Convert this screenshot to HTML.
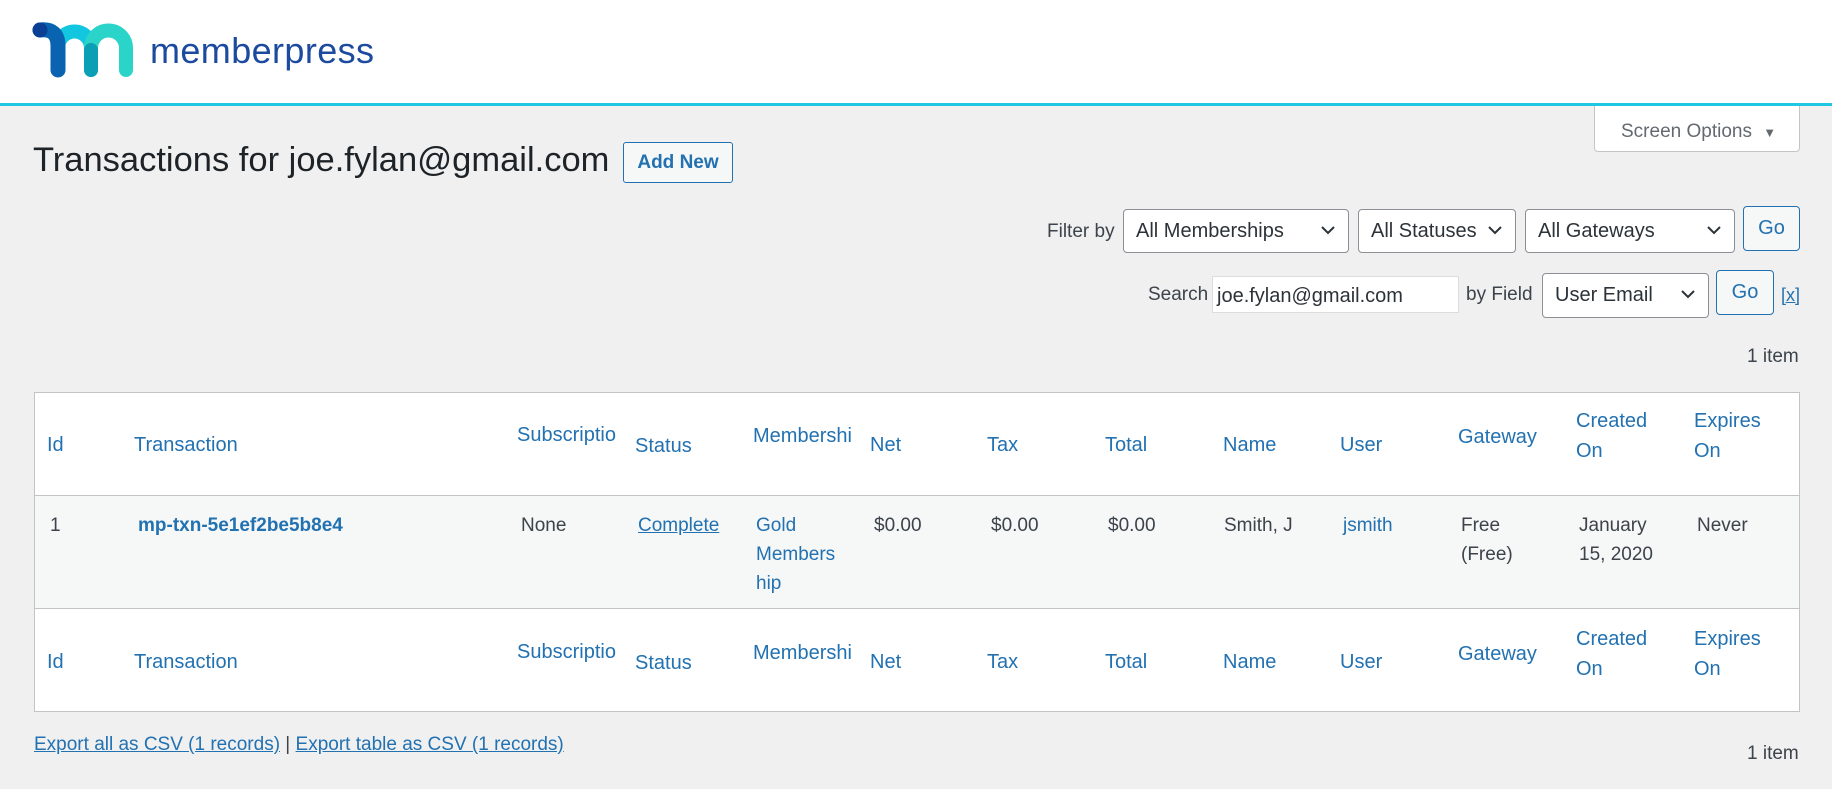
<!DOCTYPE html>
<html><head><meta charset="utf-8"><style>
*{margin:0;padding:0;box-sizing:border-box}
body{width:1832px;height:789px;background:#f0f0f1;font-family:"Liberation Sans",sans-serif;color:#3c434a;position:relative;overflow:hidden;font-size:19px}
.a{position:absolute;white-space:nowrap}
.l{color:#2271b1}
.hd{position:absolute;left:0;top:0;width:1832px;height:106px;background:#fff;border-bottom:3px solid #1fc7e4}
.sel{position:absolute;background:#fff;border:1px solid #8c8f94;border-radius:4px;height:44px;font-size:20px;color:#2c3338;padding:0 12px;line-height:42px}
.sel svg{position:absolute;right:12px;top:15px}
.go{position:absolute;border:1px solid #2271b1;border-radius:4px;background:#f6f7f7;color:#2271b1;font-size:20px;text-align:center}
.tbl{position:absolute;left:34px;top:392px;width:1766px;height:320px;border:1px solid #c3c4c7;background:#fff}
.r2{position:absolute;left:0;top:102px;width:100%;height:114px;background:#f6f7f7;border-top:1px solid #c3c4c7;border-bottom:1px solid #c3c4c7}
.th{font-size:20px;color:#2271b1;line-height:30px}
.td{font-size:19px;line-height:29px}
</style></head><body>
<div class="hd"></div>
<svg class="a" style="left:30px;top:18px" width="110" height="66" viewBox="30 18 110 66">
<path d="M58,48 A16.5,16.5 0 0 1 91,48 L91,70" fill="none" stroke="#12c6df" stroke-width="14" stroke-linecap="round"/>
<path d="M91,48 A17.5,17.5 0 0 1 126,48 L126,70" fill="none" stroke="#2ad4c9" stroke-width="14" stroke-linecap="round"/>
<path d="M91,50 L91,70" fill="none" stroke="#0b9fb5" stroke-width="14" stroke-linecap="round"/>
<path d="M40,30 Q58,28 58,46 L58,70" fill="none" stroke="#0a63b0" stroke-width="15" stroke-linecap="round"/>
<circle cx="40" cy="30" r="7.5" fill="#0a3f94"/>
</svg>
<div class="a" style="left:150px;top:30px;font-size:36px;color:#1b4a9e;letter-spacing:0.4px">memberpress</div>

<div class="a" style="left:1594px;top:106px;width:206px;height:46px;background:#fff;border:1px solid #c3c4c7;border-top:none;border-radius:0 0 4px 4px;color:#646970;font-size:19px;line-height:52px;padding-left:26px">Screen Options <span style="font-size:13px;margin-left:6px">▼</span></div>

<div class="a" style="left:33px;top:141px;font-size:34.5px;color:#1d2327">Transactions for joe.fylan@gmail.com</div>
<div class="a" style="left:623px;top:142px;width:110px;height:41px;border:1px solid #2271b1;border-radius:3px;background:#f6f7f7;color:#2271b1;font-size:19px;font-weight:bold;text-align:center;line-height:39px">Add New</div>

<div class="a" style="left:1047px;top:221px;font-size:19px">Filter by</div>
<div class="sel" style="left:1123px;top:209px;width:226px">All Memberships<svg width="16" height="10" viewBox="0 0 16 10"><path d="M2 2l6 6 6-6" fill="none" stroke="#2c3338" stroke-width="2"/></svg></div>
<div class="sel" style="left:1358px;top:209px;width:158px">All Statuses<svg width="16" height="10" viewBox="0 0 16 10"><path d="M2 2l6 6 6-6" fill="none" stroke="#2c3338" stroke-width="2"/></svg></div>
<div class="sel" style="left:1525px;top:209px;width:210px">All Gateways<svg width="16" height="10" viewBox="0 0 16 10"><path d="M2 2l6 6 6-6" fill="none" stroke="#2c3338" stroke-width="2"/></svg></div>
<div class="go" style="left:1743px;top:206px;width:57px;height:45px;line-height:43px">Go</div>

<div class="a" style="left:1148px;top:284px;font-size:19px">Search</div>
<div class="a" style="left:1212px;top:276px;width:247px;height:37px;background:#fff;border:1px solid #dcdcde;font-size:20px;color:#2c3338;padding-left:4px;line-height:38px">joe.fylan@gmail.com</div>
<div class="a" style="left:1466px;top:284px;font-size:19px">by Field</div>
<div class="sel" style="left:1542px;top:273px;width:167px;height:45px;line-height:43px">User Email<svg width="16" height="10" viewBox="0 0 16 10"><path d="M2 2l6 6 6-6" fill="none" stroke="#2c3338" stroke-width="2"/></svg></div>
<div class="go" style="left:1716px;top:270px;width:58px;height:45px;line-height:43px">Go</div>
<div class="a l" style="left:1781px;top:285px;font-size:18px;text-decoration:underline">[x]</div>

<div class="a" style="left:1747px;top:346px;font-size:19px">1 item</div>

<div class="tbl"><div class="r2"></div></div>

<!-- header -->
<div class="a th" style="left:47px;top:430px">Id</div>
<div class="a th" style="left:134px;top:430px">Transaction</div>
<div class="a th" style="left:517px;top:420px">Subscriptio</div>
<div class="a th" style="left:635px;top:431px">Status</div>
<div class="a th" style="left:753px;top:421px">Membershi</div>
<div class="a th" style="left:870px;top:430px">Net</div>
<div class="a th" style="left:987px;top:430px">Tax</div>
<div class="a th" style="left:1105px;top:430px">Total</div>
<div class="a th" style="left:1223px;top:430px">Name</div>
<div class="a th" style="left:1340px;top:430px">User</div>
<div class="a th" style="left:1458px;top:422px">Gateway</div>
<div class="a th" style="left:1576px;top:406px">Created<br>On</div>
<div class="a th" style="left:1694px;top:406px">Expires<br>On</div>

<!-- body -->
<div class="a td" style="left:50px;top:511px">1</div>
<div class="a td l" style="left:138px;top:511px;font-weight:bold">mp-txn-5e1ef2be5b8e4</div>
<div class="a td" style="left:521px;top:511px">None</div>
<div class="a td l" style="left:638px;top:511px;text-decoration:underline">Complete</div>
<div class="a td l" style="left:756px;top:511px">Gold<br>Members<br>hip</div>
<div class="a td" style="left:874px;top:511px">$0.00</div>
<div class="a td" style="left:991px;top:511px">$0.00</div>
<div class="a td" style="left:1108px;top:511px">$0.00</div>
<div class="a td" style="left:1224px;top:511px">Smith, J</div>
<div class="a td l" style="left:1343px;top:511px">jsmith</div>
<div class="a td" style="left:1461px;top:511px">Free<br>(Free)</div>
<div class="a td" style="left:1579px;top:511px">January<br>15, 2020</div>
<div class="a td" style="left:1697px;top:511px">Never</div>

<!-- footer -->
<div class="a th" style="left:47px;top:647px">Id</div>
<div class="a th" style="left:134px;top:647px">Transaction</div>
<div class="a th" style="left:517px;top:637px">Subscriptio</div>
<div class="a th" style="left:635px;top:648px">Status</div>
<div class="a th" style="left:753px;top:638px">Membershi</div>
<div class="a th" style="left:870px;top:647px">Net</div>
<div class="a th" style="left:987px;top:647px">Tax</div>
<div class="a th" style="left:1105px;top:647px">Total</div>
<div class="a th" style="left:1223px;top:647px">Name</div>
<div class="a th" style="left:1340px;top:647px">User</div>
<div class="a th" style="left:1458px;top:639px">Gateway</div>
<div class="a th" style="left:1576px;top:624px">Created<br>On</div>
<div class="a th" style="left:1694px;top:624px">Expires<br>On</div>

<div class="a" style="left:34px;top:734px;font-size:19px"><span class="l" style="text-decoration:underline">Export all as CSV (1 records)</span> | <span class="l" style="text-decoration:underline">Export table as CSV (1 records)</span></div>
<div class="a" style="left:1747px;top:743px;font-size:19px">1 item</div>
</body></html>
